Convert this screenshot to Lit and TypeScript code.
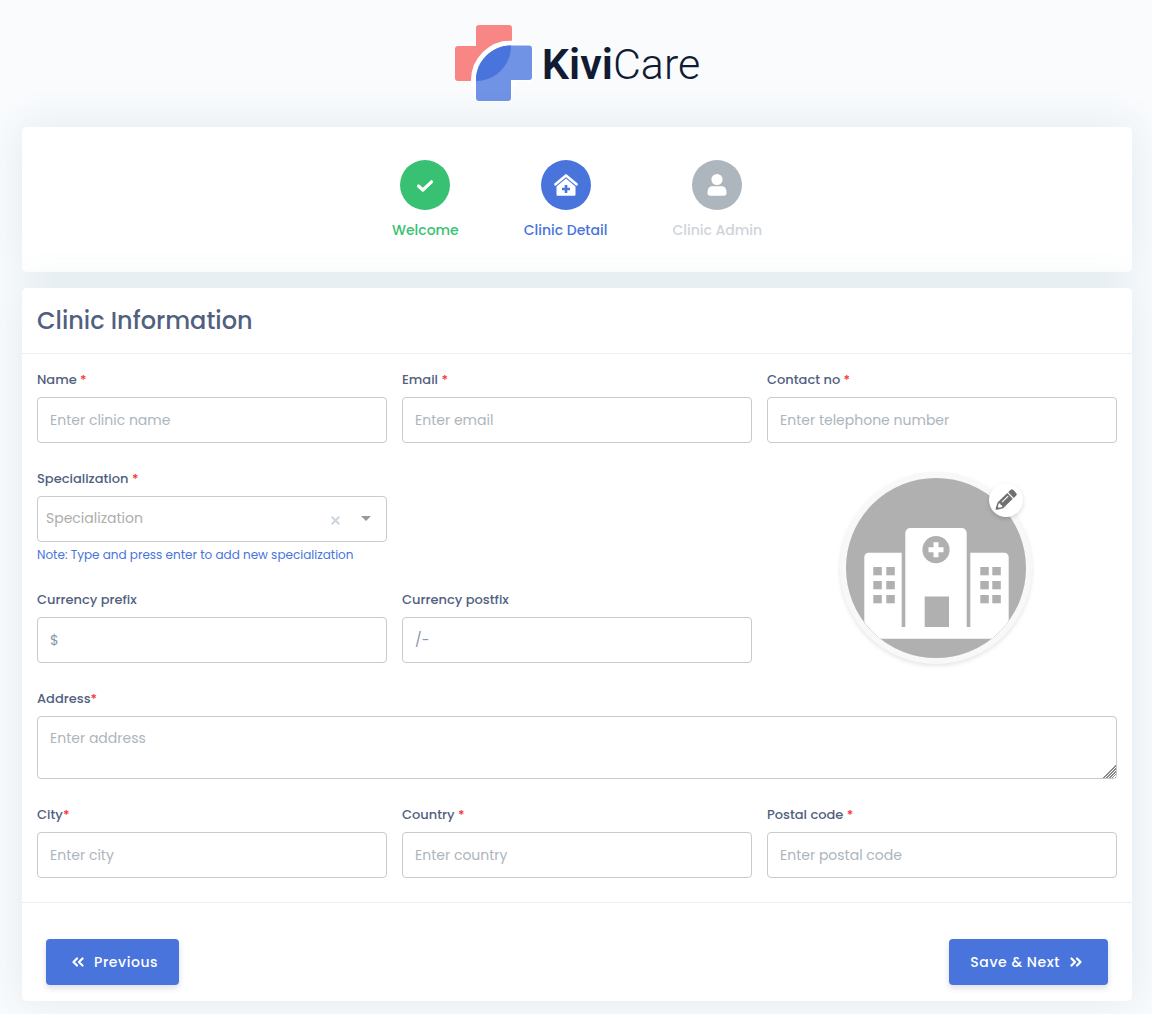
import { LitElement, html, svg, css, nothing } from "lit";
import { customElement, property } from "lit/decorators.js";

const fontStack = css`Poppins, Inter, "Open Sans", "Liberation Sans", sans-serif`;

@customElement("kc-logo")
export class KcLogo extends LitElement {
  static styles = css`
    :host {
      display: flex;
      justify-content: center;
      align-items: center;
      gap: 8px;
      color: #111b33;
      font-family: Roboto, "Liberation Sans", sans-serif;
      font-size: 43px;
      line-height: 48px;
    }
    .mark {
      display: block;
      width: 80px;
      height: 78px;
    }
    .name {
      padding-top: 2px;
    }
    .bold {
      font-weight: 600;
    }
    .light {
      font-weight: 300;
    }
  `;

  render() {
    return html`
      <svg class="mark" viewBox="0 0 80 78" aria-hidden="true">
        <path
          d="M25 1h30a3 3 0 0 1 3 3v53H4a3 3 0 0 1-3-3V25a3 3 0 0 1 3-3h18V4a3 3 0 0 1 3-3z"
          fill="#f78684"
        />
        <path
          d="M57 21.500h18a3 3 0 0 1 3 3V53a3 3 0 0 1-3 3H57v18a3 3 0 0 1-3 3H25a3 3 0 0 1-3-3V56C22 37 38 21.500 57 21.500z"
          fill="#fff"
          stroke="#fff"
          stroke-width="10"
          clip-path="inset(0 21px 20px 0)"
        />
        <path
          d="M57 21.500h18a3 3 0 0 1 3 3V53a3 3 0 0 1-3 3H57v18a3 3 0 0 1-3 3H25a3 3 0 0 1-3-3V56C22 37 38 21.500 57 21.500z"
          fill="#7093e5"
          stroke="#fff"
          stroke-width="3"
          paint-order="stroke"
        />
        <path d="M57 21.500C57 41 42 57 22 57V56C22 37 38 21.500 57 21.500z" fill="#4874dc" />
      </svg>
      <div class="name"><span class="bold">Kivi</span><span class="light">Care</span></div>
    `;
  }
}

const stepIcons = {
  check: svg`<path d="M5.500 13l4.300 4L18.500 8.800" fill="none" stroke="#fff" stroke-width="3.200" stroke-linecap="round" stroke-linejoin="round"/>`,
  clinic: svg`
    <path d="M1.500 11.300L12 2.400l10.500 8.900" fill="none" stroke="#fff" stroke-width="2.600" stroke-linecap="round" stroke-linejoin="round"/>
    <path fill-rule="evenodd" fill="#fff" d="M12 5.400l9.500 8.200v8.200a1 1 0 0 1-1 1H3.500a1 1 0 0 1-1-1v-8.200zM10.700 12v2.700H8v2.600h2.700V20h2.600v-2.700H16v-2.600h-2.700V12z"/>`,
  user: svg`
    <circle cx="12" cy="6.500" r="5.600" fill="#fff"/>
    <path d="M2.500 20c0-4.500 1.500-6.800 5-6.800h9c3.500 0 5 2.300 5 6.800 0 2-1 2.700-2.500 2.700H5c-1.500 0-2.500-.7-2.500-2.700z" fill="#fff"/>`,
};

@customElement("kc-step")
export class KcStep extends LitElement {
  @property() label = "";
  @property() icon: keyof typeof stepIcons = "check";
  @property({ reflect: true }) status = "pending";

  static styles = css`
    :host {
      display: block;
    }
    .link {
      display: flex;
      flex-direction: column;
      align-items: center;
      gap: 10px;
      color: var(--tone);
      font: 500 14px/20px ${fontStack};
      text-decoration: none;
    }
    :host([status="done"]) {
      --tone: #38c172;
    }
    :host([status="active"]) {
      --tone: #4874dc;
    }
    :host([status="pending"]) {
      --tone: #adb5bd;
    }
    .disc {
      display: flex;
      justify-content: center;
      align-items: center;
      width: 50px;
      height: 50px;
      border-radius: 50%;
      background: var(--tone);
    }
    .icon {
      width: 24px;
      height: 24px;
    }
    :host([status="pending"]) .text {
      color: #ced4da;
    }
  `;

  render() {
    return html`
      <a class="link" href="#${this.icon}">
        <span class="disc"><svg class="icon" viewBox="0 0 24 24" aria-hidden="true">${stepIcons[this.icon]}</svg></span>
        <span class="text">${this.label}</span>
      </a>
    `;
  }
}

const windowColumns = [27, 40, 134, 146];
const windowRows = [89, 103, 117];

@customElement("kc-clinic-photo")
export class KcClinicPhoto extends LitElement {
  static styles = css`
    :host {
      display: block;
      position: relative;
      width: 192px;
      height: 192px;
    }
    .photo {
      display: block;
      box-sizing: border-box;
      width: 100%;
      height: 100%;
      border: 6px solid #f8f8f8;
      border-radius: 50%;
      background: #b0b0b0;
      box-shadow: 0 2px 4px rgba(0, 0, 0, 0.1);
    }
    .edit {
      position: absolute;
      top: 11px;
      right: 9px;
      display: flex;
      justify-content: center;
      align-items: center;
      width: 34px;
      height: 34px;
      padding: 0;
      border: 0;
      border-radius: 50%;
      background: #fff;
      box-shadow: 0 2px 4px rgba(0, 0, 0, 0.15);
      cursor: pointer;
    }
    .pencil {
      width: 22px;
      height: 22px;
    }
  `;

  render() {
    return html`
      <svg class="photo" viewBox="0 0 180 180" role="img" aria-label="Clinic">
        <clipPath id="round"><circle cx="90" cy="90" r="90" /></clipPath>
        <g clip-path="url(#round)">
          <path
            fill="#fff"
            d="M18.300 160.700V79a4.300 4.300 0 0 1 4.300-4.300H55.700V149H59.300V55a5 5 0 0 1 5-5H115.700a5 5 0 0 1 5 5V149H124.300V74.700H158.400a4.300 4.300 0 0 1 4.300 4.300V160.700z"
          />
          <rect x="78.700" y="118.500" width="24.300" height="30.500" fill="#b0b0b0" />
          <circle cx="90" cy="71.700" r="13.600" fill="#b0b0b0" />
          <path d="M87.500 64.200h5v5h5v5h-5v5h-5v-5h-5v-5h5z" fill="#fff" />
          ${windowColumns.map((x) =>
            windowRows.map((y) => svg`<rect x=${x + 0.3} y=${y} width="8.500" height="8.300" fill="#b0b0b0"/>`)
          )}
        </g>
      </svg>
      <button class="edit" type="button" aria-label="Edit clinic picture">
        <svg class="pencil" viewBox="0 0 22 22" aria-hidden="true">
          <g transform="translate(1 20.500) rotate(-44)" fill="#707070">
            <path
              fill-rule="evenodd"
              d="M.6-1L6-4H19.500V4H6L.6 1A1.200 1.200 0 0 1 .6-1zM3.200-.6V.6L6.400 2.600 7.200.9 6.400 0 7.200-.9 6.400-2.600zM9.500-1.700V-.6H18V-1.700z"
            />
            <path d="M20.800-4H24a2 2 0 0 1 2 2V2a2 2 0 0 1-2 2H20.800z" />
          </g>
        </svg>
      </button>
    `;
  }
}

@customElement("app-root")
export class AppRoot extends LitElement {
  static styles = css`
    :host {
      display: block;
      min-height: 100vh;
      box-sizing: border-box;
      padding: 24px 20px 13px 22px;
      background: #f9fbfd;
      color: #525f7f;
      font: 400 14px/20px ${fontStack};
    }
    *,
    *::before {
      box-sizing: border-box;
    }
    .page {
      display: flex;
      flex-direction: column;
      gap: 16px;
    }
    .brand {
      padding-bottom: 9px;
    }
    .card {
      border-radius: 5px;
      background: #fff;
      box-shadow: 0 0 40px rgba(49, 110, 135, 0.12);
    }
    .steps {
      display: flex;
      justify-content: center;
      gap: 65px;
      padding: 33px 16px 32px;
    }
    .head {
      padding: 16px 15px;
      border-bottom: 1px solid #eceef0;
    }
    .title {
      margin: 0;
      font-size: 24px;
      line-height: 33px;
      font-weight: 500;
    }
    .grid {
      display: grid;
      grid-template-columns: repeat(3, minmax(0, 1fr));
      gap: 26px 15px;
      padding: 16px 15px 24px;
    }
    .wide {
      grid-column: 1 / -1;
    }
    .photo-cell {
      grid-column: 3;
      grid-row: 2 / span 2;
      display: flex;
      justify-content: center;
      align-items: flex-start;
      margin-bottom: -2px;
      padding: 3px 12px 0 0;
    }
    .label {
      display: block;
      margin-bottom: 7px;
      font-size: 13px;
      line-height: 20px;
      font-weight: 500;
    }
    .star {
      color: #f5332f;
    }
    .control {
      display: block;
      width: 100%;
      height: 46px;
      padding: 0 12px;
      border: 1px solid #cacaca;
      border-radius: 4px;
      outline: 0;
      background: #fff;
      color: #8898aa;
      font: 400 14px/20px ${fontStack};
    }
    .control::placeholder {
      color: #adb5bd;
      opacity: 1;
    }
    .area {
      height: 63px;
      padding-top: 11px;
      resize: vertical;
    }
    .area::-webkit-resizer {
      background:
        linear-gradient(135deg, #fff 55%, transparent 55%),
        repeating-linear-gradient(135deg, #888 0 1px, #fff 1px 2px);
    }
    .picker {
      position: relative;
    }
    .select {
      appearance: none;
      padding: 0 72px 2px 8px;
      color: #adadad;
    }
    .clear {
      position: absolute;
      top: 17px;
      right: 44px;
      display: flex;
      padding: 3px;
      border: 0;
      background: none;
      cursor: pointer;
    }
    .caret {
      position: absolute;
      top: 20px;
      right: 16px;
      pointer-events: none;
    }
    .note {
      margin: 3px 0 0;
      color: #4874dc;
      font-size: 12px;
      line-height: 19px;
    }
    .foot {
      display: flex;
      justify-content: space-between;
      padding: 36px 24px 16px;
      border-top: 1px solid #eceef0;
    }
    .button {
      display: flex;
      align-items: center;
      gap: 10px;
      height: 46px;
      border: 0;
      border-radius: 4px;
      background: #4874dc;
      box-shadow: 0 3px 6px rgba(50, 50, 93, 0.16);
      color: #fff;
      font: 500 14px/20px ${fontStack};
      letter-spacing: 0.04em;
      cursor: pointer;
    }
    .previous {
      padding: 0 21px 0 26px;
    }
    .next {
      padding: 0 26px 0 21px;
    }
  `;

  private label(id: string, text: string, required = true, space = " ") {
    return html`<label class="label" for=${id}
      >${text}${required ? html`${space}<span class="star">*</span>` : nothing}</label
    >`;
  }

  private field(id: string, text: string, placeholder: string, space = " ") {
    return html`
      <div>
        ${this.label(id, text, true, space)}
        <input class="control" id=${id} type="text" placeholder=${placeholder} />
      </div>
    `;
  }

  private money(id: string, text: string, value: string) {
    return html`
      <div>
        ${this.label(id, text, false)}
        <input class="control" id=${id} type="text" .value=${value} />
      </div>
    `;
  }

  private chevrons(path: string) {
    return html`<svg width="12" height="10" viewBox="0 0 12 10" aria-hidden="true">
      <path d=${path} fill="none" stroke="#fff" stroke-width="2.200" stroke-linecap="round" stroke-linejoin="round" />
    </svg>`;
  }

  render() {
    return html`
      <main class="page">
        <kc-logo class="brand"></kc-logo>
        <nav class="card steps">
          <kc-step label="Welcome" icon="check" status="done"></kc-step>
          <kc-step label="Clinic Detail" icon="clinic" status="active"></kc-step>
          <kc-step label="Clinic Admin" icon="user" status="pending"></kc-step>
        </nav>
        <form class="card">
          <header class="head"><h1 class="title">Clinic Information</h1></header>
          <div class="grid">
            ${this.field("name", "Name", "Enter clinic name")} ${this.field("email", "Email", "Enter email")}
            ${this.field("contact", "Contact no", "Enter telephone number")}
            <div>
              ${this.label("specialization", "Specialization")}
              <div class="picker">
                <select class="control select" id="specialization">
                  <option>Specialization</option>
                </select>
                <button class="clear" type="button" aria-label="Clear">
                  <svg width="9" height="9" viewBox="0 0 9 9" aria-hidden="true">
                    <path d="M.7.7l7.600 7.600M8.300.7L.7 8.300" stroke="#ccd5de" stroke-width="2" />
                  </svg>
                </button>
                <svg class="caret" width="10" height="5" viewBox="0 0 10 5" aria-hidden="true">
                  <path d="M0 0h10L5 5z" fill="#999" />
                </svg>
              </div>
              <p class="note">Note: Type and press enter to add new specialization</p>
            </div>
            <div></div>
            <div class="photo-cell"><kc-clinic-photo></kc-clinic-photo></div>
            ${this.money("prefix", "Currency prefix", "$")} ${this.money("postfix", "Currency postfix", "/-")}
            <div class="wide">
              ${this.label("address", "Address", true, "")}
              <textarea class="control area" id="address" placeholder="Enter address"></textarea>
            </div>
            ${this.field("city", "City", "Enter city", "")} ${this.field("country", "Country", "Enter country")}
            ${this.field("postal", "Postal code", "Enter postal code")}
          </div>
          <footer class="foot">
            <button class="button previous" type="button">
              ${this.chevrons("M5 1.500L1.500 5 5 8.500M10.500 1.500L7 5l3.500 3.500")}<span>Previous</span>
            </button>
            <button class="button next" type="button">
              <span>Save &amp; Next</span>${this.chevrons("M1.500 1.500L5 5 1.500 8.500M7 1.500L10.500 5 7 8.500")}
            </button>
          </footer>
        </form>
      </main>
    `;
  }
}
